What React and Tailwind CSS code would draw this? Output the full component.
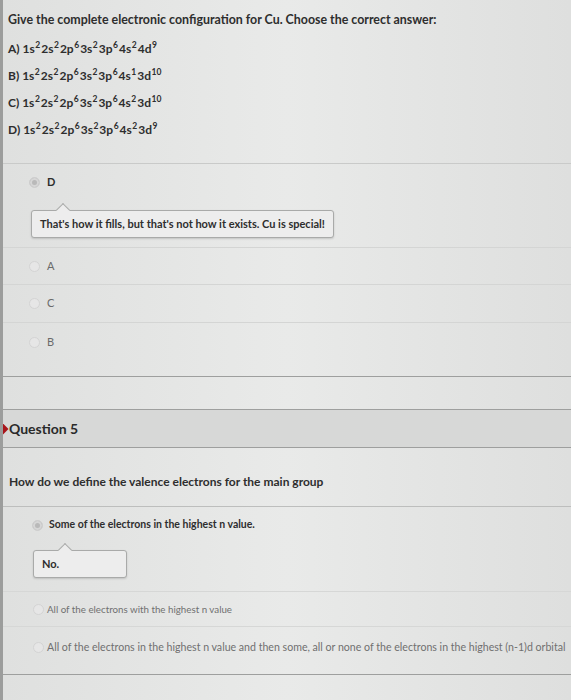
import React from "react";

const F = { fontFamily: "Lato, 'Open Sans', sans-serif" };

function Cfg({ label, parts }) {
  return (
    <div className="h-[27px] flex items-center text-[12px] font-bold text-[#2e2e2e] leading-none pt-[3px]">
      <span>
        {label}&nbsp;
        {parts.map(([b, s], i) => (
          <React.Fragment key={i}>
            {b}
            <span className="relative -top-[5px] text-[8.5px] ml-[0.5px] mr-[1px]">{s}</span>
          </React.Fragment>
        ))}
      </span>
    </div>
  );
}

function Radio({ checked, faint }) {
  return (
    <span
      className={
        "inline-block w-[11px] h-[11px] rounded-full border " +
        (checked
          ? "bg-[#b9b9b9] border-[#cfcfcf] shadow-[inset_0_0_0_2px_#d6d6d6]"
          : faint
          ? "border-[#d4d4d4] bg-[#e6e6e6]"
          : "border-[#c8c8c8] bg-[#e8e8e8]")
      }
    />
  );
}

function Feedback({ children, className }) {
  return (
    <div className={"relative " + className}>
      <div className="relative rounded-[3px] border border-[#a9aaa9] bg-[#ededed] shadow-[0_1px_2px_rgba(0,0,0,0.15)] h-[28px] flex items-center px-[8px] text-[11px] font-bold text-[#2e2e2e]">
        {children}
      </div>
      <span className="absolute left-[27px] -top-[5px] w-[10px] h-[10px] rotate-45 bg-[#ededed] border-l border-t border-[#a9aaa9]" />
    </div>
  );
}

export default function App() {
  const base = [["1s", "2"], ["2s", "2"], ["2p", "6"], ["3s", "2"], ["3p", "6"]];
  return (
    <div
      style={F}
      className="w-[571px] h-[700px] overflow-hidden bg-gradient-to-r from-[#dfe0df] via-[#e9eae9] to-[#dedfde] border-l-[3px] border-[#9c9d9c] flex flex-col"
    >
      {/* Question 4 text */}
      <div className="pl-[5px] pt-[12px]">
        <div className="h-[16px] flex items-center text-[12.4px] font-bold text-[#2e2e2e]">
          Give the complete electronic configuration for Cu. Choose the correct answer:
        </div>
        <div className="mt-[6px]">
          <Cfg label="A)" parts={[...base, ["4s", "2"], ["4d", "9"]]} />
          <Cfg label="B)" parts={[...base, ["4s", "1"], ["3d", "10"]]} />
          <Cfg label="C)" parts={[...base, ["4s", "2"], ["3d", "10"]]} />
          <Cfg label="D)" parts={[...base, ["4s", "2"], ["3d", "9"]]} />
        </div>
      </div>

      {/* Answers */}
      <div className="mt-[21px] border-t border-[#c9cac9]">
        <div className="h-[36px] flex items-center gap-[7px] pl-[26px] text-[11px] font-bold text-[#2e2e2e]">
          <Radio checked />
          <span>D</span>
        </div>
        <Feedback className="ml-[28px] mr-[237px] mt-[10px]">
          That's how it fills, but that's not how it exists. Cu is special!
        </Feedback>
        <div className="mt-[9px] border-t border-[#d4d5d4] h-[37px] flex items-center gap-[7px] pl-[26px] text-[11px] text-[#6a6a6a]">
          <Radio faint />
          <span>A</span>
        </div>
        <div className="border-t border-[#d4d5d4] h-[38px] flex items-center gap-[7px] pl-[26px] text-[11px] text-[#6a6a6a]">
          <Radio faint />
          <span>C</span>
        </div>
        <div className="border-t border-[#d4d5d4] h-[39px] flex items-center gap-[7px] pl-[26px] text-[11px] text-[#6a6a6a]">
          <Radio faint />
          <span>B</span>
        </div>
      </div>

      {/* divider */}
      <div className="mt-[15px] border-t border-[#9e9f9e] h-[33px]" />

      {/* Question 5 header */}
      <div className="relative border-t border-b border-[#9e9f9e] bg-[#d7d8d7] h-[39px] flex items-center pl-[6px]">
        <span className="absolute -left-[9px] top-[13px] w-[12px] h-[12px] rotate-45 bg-[#a8141a]" />
        <span className="text-[14px] font-bold text-[#2a2a2a]">Question 5</span>
      </div>

      <div className="h-[58px] flex items-center pl-[6px] text-[12px] font-bold text-[#2e2e2e] pt-[9px]">
        How do we define the valence electrons for the main group
      </div>

      <div className="border-t border-[#bdbebd]">
        <div className="h-[36px] flex items-center gap-[6px] pl-[29px] text-[10.5px] font-bold text-[#2e2e2e]">
          <Radio checked />
          <span>Some of the electrons in the highest n value.</span>
        </div>
        <Feedback className="ml-[30px] w-[94px] mt-[7px]">No.</Feedback>
        <div className="mt-[13px] border-t border-[#d6d7d6] h-[35px] flex items-center gap-[3px] pl-[30px] text-[9.75px] text-[#707070]">
          <Radio faint />
          <span>All of the electrons with the highest n value</span>
        </div>
        <div className="border-t border-[#d6d7d6] h-[48px] flex items-center gap-[3px] pl-[30px] text-[10.6px] text-[#707070] whitespace-nowrap pb-[6px]">
          <Radio faint />
          <span>
            All of the electrons in the highest n value and then some, all or none of the electrons in the highest (n-1)d orbital
          </span>
        </div>
      </div>
      <div className="border-t border-[#9e9f9e]" />
    </div>
  );
}
